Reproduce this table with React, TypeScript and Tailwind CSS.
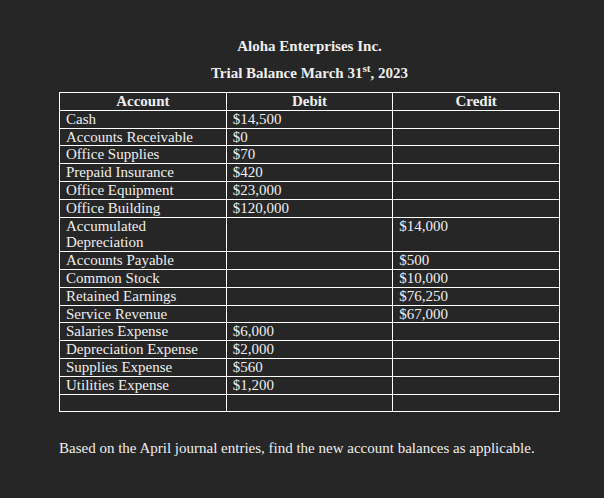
import React from "react";

const rows: [string, string, string][] = [
  ["Cash", "$14,500", ""],
  ["Accounts Receivable", "$0", ""],
  ["Office Supplies", "$70", ""],
  ["Prepaid Insurance", "$420", ""],
  ["Office Equipment", "$23,000", ""],
  ["Office Building", "$120,000", ""],
  ["Accumulated Depreciation", "", "$14,000"],
  ["Accounts Payable", "", "$500"],
  ["Common Stock", "", "$10,000"],
  ["Retained Earnings", "", "$76,250"],
  ["Service Revenue", "", "$67,000"],
  ["Salaries Expense", "$6,000", ""],
  ["Depreciation Expense", "$2,000", ""],
  ["Supplies Expense", "$560", ""],
  ["Utilities Expense", "$1,200", ""],
  ["", "", ""],
];

export default function App() {
  return (
    <div className="min-h-screen w-full bg-[#262626] text-[#eeeeee] font-['Liberation_Serif',serif] text-[15px] pl-[59px] pt-[38px]">
      <div className="w-[501px]">
        <p className="text-center font-bold leading-[17px]">Aloha Enterprises Inc.</p>
        <p className="text-center font-bold leading-[17px] mt-[10px]">
          Trial Balance March 31<sup>st</sup>, 2023
        </p>
        <table className="w-[501px] table-fixed border-collapse mt-[10px] leading-[16.8px]">
          <thead>
            <tr>
              <th className="border border-white font-bold text-center p-0">Account</th>
              <th className="border border-white font-bold text-center p-0">Debit</th>
              <th className="border border-white font-bold text-center p-0">Credit</th>
            </tr>
          </thead>
          <tbody>
            {rows.map(([account, debit, credit], i) => (
              <tr key={i}>
                <td className="border border-white align-top py-0 pl-[6px] pr-[20px]">
                  {account || <span>&nbsp;</span>}
                </td>
                <td className="border border-white align-top py-0 pl-[6px]">{debit}</td>
                <td className="border border-white align-top py-0 pl-[6px]">{credit}</td>
              </tr>
            ))}
          </tbody>
        </table>
        <p className="mt-[28px] leading-[17px] whitespace-nowrap">
          Based on the April journal entries, find the new account balances as applicable.
        </p>
      </div>
    </div>
  );
}
